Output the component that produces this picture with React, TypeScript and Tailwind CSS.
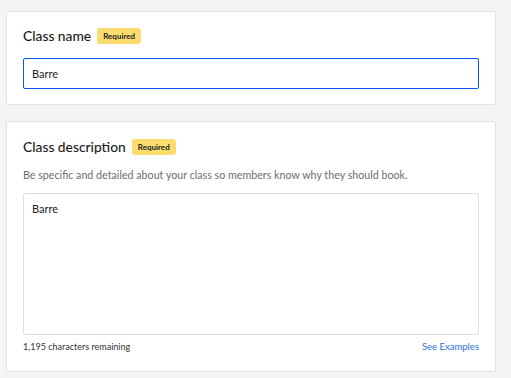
import { useState } from 'react';

function RequiredBadge() {
  return (
    <span className="inline-flex items-center h-[16px] px-[6px] rounded-[3px] bg-[#fbdc6f] text-[8px] font-bold text-[#222] leading-none">
      Required
    </span>
  );
}

export default function App() {
  const [name, setName] = useState('Barre');
  const [desc, setDesc] = useState('Barre');
  const remaining = 1200 - desc.length;

  return (
    <div
      className="min-h-screen w-full bg-[#f4f4f4] pt-[11px] pl-[6px]"
      style={{ fontFamily: 'Lato, "Open Sans", sans-serif' }}
    >
      <div className="w-[490px] flex flex-col gap-[16px]">
        <section className="bg-white border border-[#e2e2e2] rounded-[2px] px-[16px] pt-[14px] pb-[15px]">
          <div className="flex items-center gap-[6px] h-[20px]">
            <h2 className="text-[13.8px] font-medium text-[#1c1c1c]">Class name</h2>
            <RequiredBadge />
          </div>
          <input
            value={name}
            onChange={(e) => setName(e.target.value)}
            className="mt-[12px] w-[456px] h-[31px] px-[8px] border-[1.5px] border-[#0b55ef] rounded-[2px] text-[11px] text-[#222] outline-none"
          />
        </section>

        <section className="bg-white border border-[#e2e2e2] rounded-[2px] px-[16px] pt-[15px] pb-[17px]">
          <div className="flex items-center gap-[6px] h-[20px]">
            <h2 className="text-[13.8px] font-medium text-[#1c1c1c]">Class description</h2>
            <RequiredBadge />
          </div>
          <p className="mt-[11px] text-[10.7px] text-[#6e6e6e] leading-[14px]">
            Be specific and detailed about your class so members know why they should book.
          </p>
          <textarea
            value={desc}
            onChange={(e) => setDesc(e.target.value)}
            className="mt-[11px] block w-[456px] h-[142px] px-[8px] py-[7px] border border-[#dedede] rounded-[2px] text-[11px] text-[#222] outline-none resize-none"
          />
          <div className="mt-[5px] flex justify-between items-center text-[9px] leading-[14px]">
            <span className="text-[#333]">{remaining.toLocaleString('en-US')} characters remaining</span>
            <a href="#" className="text-[#2f6fe4] text-[9.5px]">See Examples</a>
          </div>
        </section>
      </div>
    </div>
  );
}
